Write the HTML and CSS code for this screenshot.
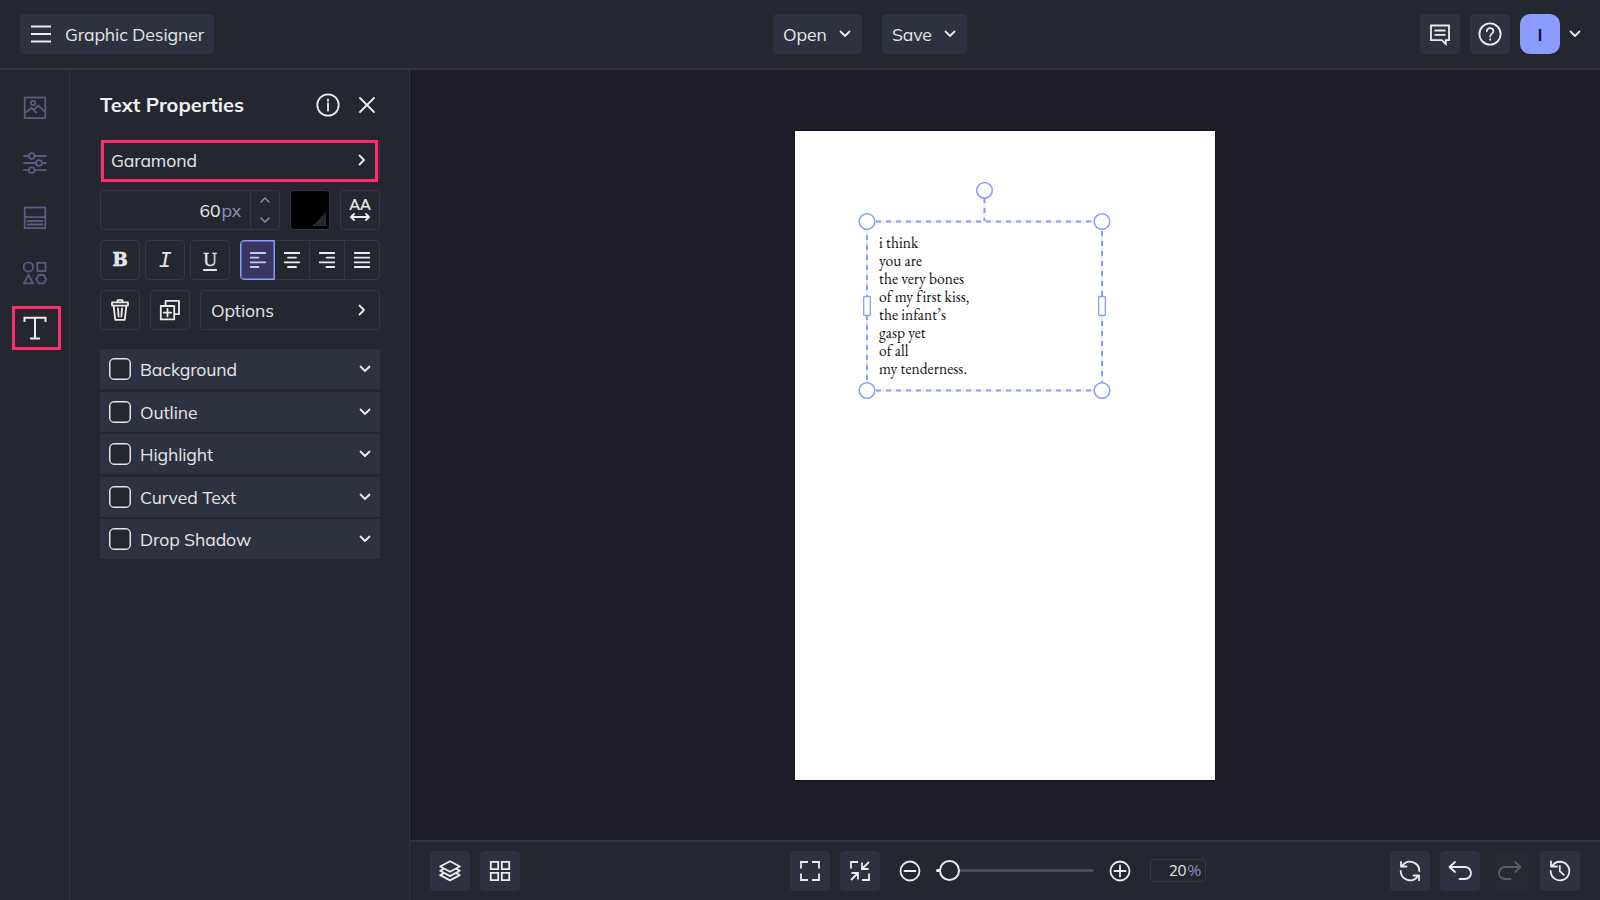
FILE: index.html
```html
<!DOCTYPE html>
<html lang="en">
<head>
    <meta charset="UTF-8">
    <meta name="viewport" content="width=device-width, initial-scale=1.0">
    <title>Graphic Designer</title>
    <link rel="stylesheet" href="styles.css">
</head>
<body>
    <header class="topbar">
        <div class="topbar-left">
            <button class="btn menu-btn">
                <svg width="20" height="18" viewBox="0 0 20 18"><path d="M0 1.5h20M0 9h20M0 16.5h20"/></svg>
                <span>Graphic Designer</span>
            </button>
        </div>
        <div class="topbar-center">
            <button class="btn open-btn"><span>Open</span><svg width="12" height="8" viewBox="0 0 12 8"><path d="M1.5 1.5L6 6l4.5-4.5"/></svg></button>
            <button class="btn save-btn"><span>Save</span><svg width="12" height="8" viewBox="0 0 12 8"><path d="M1.5 1.5L6 6l4.5-4.5"/></svg></button>
        </div>
        <div class="topbar-right">
            <button class="btn icon-btn">
                <svg width="24" height="24" viewBox="0 0 24 24" class="sharp"><path d="M3 3.5h18v14.7h-3.2v3.800l-4-3.800H3z"/><path d="M6.500 8.500h11M6.500 12.800h11"/></svg>
            </button>
            <button class="btn icon-btn">
                <svg width="24" height="24" viewBox="0 0 24 24"><circle cx="12" cy="12" r="10.600"/><path d="M8.800 9.200c0-4.300 6.600-4 6.600-.2 0 2.600-3.200 2.700-3.200 5.400"/><path d="M12.200 17.200v.6"/></svg>
            </button>
            <div class="avatar">I</div>
            <svg class="avatar-arrow" width="12" height="8" viewBox="0 0 12 8"><path d="M1.500 1.500L6 6l4.500-4.500"/></svg>
        </div>
    </header>

    <div class="workspace">
        <nav class="tools">
            <button class="tool">
                <svg width="24" height="24" viewBox="0 0 24 24"><rect x="1.700" y="1.500" width="20.600" height="20.600"/><circle cx="10" cy="7" r="2.200"/><path d="M2 17l6.500-5 5 4.500M10.500 13.800l5-4.200 6.500 6"/></svg>
            </button>
            <button class="tool">
                <svg width="24" height="24" viewBox="0 0 24 24"><path d="M1 5h5M12 5h11M1 12h12M19 12h4M1 19.200h5M12 19.200h11"/><circle cx="8.700" cy="5" r="2.900"/><circle cx="16" cy="12" r="2.900"/><circle cx="8.700" cy="19.200" r="2.900"/></svg>
            </button>
            <button class="tool">
                <svg width="24" height="24" viewBox="0 0 24 24"><rect x="1.700" y="1.500" width="20.600" height="20.600"/><path d="M2 11.200h20M4.500 15h15M4.500 18.500h15"/></svg>
            </button>
            <button class="tool">
                <svg width="24" height="24" viewBox="0 0 24 24"><circle cx="5.400" cy="6" r="4.700"/><rect x="14.300" y="1.800" width="8.200" height="8.200"/><path d="M5.400 14L1 22.400h9zM15.700 14h5l2.500 4.200-2.500 4.200h-5l-2.500-4.200z"/></svg>
            </button>
            <button class="tool active">
                <svg width="26" height="26" viewBox="0 0 26 26"><path d="M2.500 7V2.800h21V7M13 3v20.500M8 23.500h10"/></svg>
            </button>
        </nav>

        <aside class="panel">
            <div class="panel-head">
                <h1>Text Properties</h1>
                <svg width="24" height="24" viewBox="0 0 24 24"><circle cx="12" cy="12" r="10.700"/><path d="M12 10.200v7.600M12 6.500v1.400"/></svg>
                <svg class="close" width="18" height="18" viewBox="0 0 18 18"><path d="M2 2l14 14M16 2L2 16"/></svg>
            </div>

            <div class="row field font-field">
                <span>Garamond</span>
                <svg width="8" height="12" viewBox="0 0 8 12"><path d="M1.500 1.500L6 6l-4.500 4.500"/></svg>
            </div>

            <div class="row">
                <div class="size-field">
                    <div class="size-value">60<span class="unit">px</span></div>
                    <div class="stepper">
                        <svg width="10" height="6" viewBox="0 0 10 6"><path d="M1 5l4-4 4 4"/></svg>
                        <svg width="10" height="6" viewBox="0 0 10 6"><path d="M1 1l4 4 4-4"/></svg>
                    </div>
                </div>
                <div class="swatch"></div>
                <button class="square spacing-btn">
                    <span>AA</span>
                    <svg width="22" height="8" viewBox="0 0 22 8"><path d="M2 4h18M5 1L2 4l3 3M17 1l3 3-3 3"/></svg>
                </button>
            </div>

            <div class="row">
                <div class="styles">
                    <button class="square letter bold">B</button>
                    <button class="square letter italic">I</button>
                    <button class="square letter underline">U</button>
                </div>
                <div class="align">
                    <button class="on"><svg width="16" height="18" viewBox="0 0 16 18"><path d="M.5 2h15M.5 6.600h8M.5 11.300h15M.5 16h8"/></svg></button>
                    <button><svg width="16" height="18" viewBox="0 0 16 18"><path d="M.5 2h15M4 6.600h8M.5 11.300h15M4 16h8"/></svg></button>
                    <button><svg width="16" height="18" viewBox="0 0 16 18"><path d="M.5 2h15M7.500 6.600h8M.5 11.300h15M7.500 16h8"/></svg></button>
                    <button><svg width="16" height="18" viewBox="0 0 16 18"><path d="M.5 2h15M.5 6.600h15M.5 11.300h15M.5 16h15"/></svg></button>
                </div>
            </div>

            <div class="row">
                <button class="square">
                    <svg width="24" height="24" viewBox="0 0 24 24"><path d="M5.600 7.800l1.700 14h9.400l1.700-14M4 4.400h16v3.200H4zM9.500 4.400V2.200h5v2.200M10 10.500l.6 8M14 10.500l-.6 8"/></svg>
                </button>
                <button class="square">
                    <svg width="24" height="24" viewBox="0 0 24 24"><path d="M2.800 8h13.400v13.400H2.800zM7.600 7.500V2.800H21v13.400h-4.500M9.500 11v7.400M5.800 14.700h7.400"/></svg>
                </button>
                <div class="field options-field">
                    <span>Options</span>
                    <svg width="8" height="12" viewBox="0 0 8 12"><path d="M1.500 1.500L6 6l-4.500 4.500"/></svg>
                </div>
            </div>

            <div class="effects">
                <div class="effect"><i class="check"></i><span>Background</span><svg width="12" height="8" viewBox="0 0 12 8"><path d="M1.500 1.500L6 6l4.500-4.500"/></svg></div>
                <div class="effect"><i class="check"></i><span>Outline</span><svg width="12" height="8" viewBox="0 0 12 8"><path d="M1.500 1.500L6 6l4.500-4.500"/></svg></div>
                <div class="effect"><i class="check"></i><span>Highlight</span><svg width="12" height="8" viewBox="0 0 12 8"><path d="M1.500 1.500L6 6l4.500-4.500"/></svg></div>
                <div class="effect"><i class="check"></i><span>Curved Text</span><svg width="12" height="8" viewBox="0 0 12 8"><path d="M1.500 1.500L6 6l4.500-4.500"/></svg></div>
                <div class="effect"><i class="check"></i><span>Drop Shadow</span><svg width="12" height="8" viewBox="0 0 12 8"><path d="M1.500 1.500L6 6l4.500-4.500"/></svg></div>
            </div>
        </aside>

        <main class="stage">
            <div class="canvas-area">
                <div class="page">
                    <div class="poem">i think<br>you are<br>the very bones<br>of my first kiss,<br>the infant’s<br>gasp yet<br>of all<br>my tenderness.</div>
                    <svg class="selection" width="260" height="230" viewBox="0 0 260 230">
                        <g class="track"><path d="M12 51.500h235v169H12zM129.500 20v31"/></g>
                        <g class="dashes"><path d="M21 51.500h218M21 220.500h218M12 65v148M247 61v152M129.500 28v23"/></g>
                        <g class="handles">
                            <circle cx="129.500" cy="20.300" r="7.800"/>
                            <circle cx="12" cy="51.500" r="7.800"/>
                            <circle cx="247" cy="51.500" r="7.800"/>
                            <circle cx="12" cy="220.500" r="7.800"/>
                            <circle cx="247" cy="220.500" r="7.800"/>
                            <rect class="side" x="8.700" y="126.500" width="6.600" height="19" rx="1"/>
                            <rect class="side" x="243.700" y="126.500" width="6.600" height="19" rx="1"/>
                        </g>
                    </svg>
                </div>
            </div>

            <footer class="bottombar">
                <div class="group">
                    <button class="btn icon-btn"><svg width="24" height="24" viewBox="0 0 24 24"><path d="M12 2.200l9.800 5.300L12 12.800 2.200 7.500zM5 10.300l-2.800 1.500 9.800 5.300 9.800-5.300-2.800-1.500M5 14.600l-2.800 1.500 9.800 5.300 9.800-5.300-2.800-1.500"/></svg></button>
                    <button class="btn icon-btn"><svg width="24" height="24" viewBox="0 0 24 24" class="sharp"><path d="M2.800 2.800h7.400v7.400H2.800zM13.800 2.800h7.400v7.400h-7.400zM2.800 13.800h7.400v7.400H2.800zM13.800 13.800h7.400v7.400h-7.400z"/></svg></button>
                </div>
                <div class="group zoom">
                    <button class="btn icon-btn"><svg width="24" height="24" viewBox="0 0 24 24" class="sharp"><path d="M3 9.500V3h7M14 3h7v6.500M21 14.500V21h-7M10 21H3v-6.500"/></svg></button>
                    <button class="btn icon-btn"><svg width="24" height="24" viewBox="0 0 24 24" class="sharp"><path d="M3 9.500V3h7M21 14.500V21h-7M21 3l-7 7M14 3.500V10h6.500M3 21l7-7M10 20.500V14H3.500"/></svg></button>
                    <svg class="minus" width="22" height="22" viewBox="0 0 22 22"><circle cx="11" cy="11" r="9.500"/><path d="M5.500 11h11"/></svg>
                    <div class="slider"><div class="thumb"></div></div>
                    <svg width="22" height="22" viewBox="0 0 22 22"><circle cx="11" cy="11" r="9.500"/><path d="M5.500 11h11M11 5.500v11"/></svg>
                    <div class="percent">20<span class="unit">%</span></div>
                </div>
                <div class="group right">
                    <button class="btn icon-btn"><svg width="24" height="24" viewBox="0 0 24 24"><path d="M4.200 7A9.300 9.300 0 0 1 21.300 12M2.700 12A9.300 9.300 0 0 0 19.800 17M3 2.800V7.500h5.500M21 21.200V16.500h-5.500"/></svg></button>
                    <button class="btn icon-btn"><svg width="24" height="24" viewBox="0 0 24 24"><path d="M7 3L1.500 8 7 13M2 8h15a6 6 0 0 1 0 12H11.500"/></svg></button>
                    <button class="btn icon-btn disabled"><svg width="24" height="24" viewBox="0 0 24 24"><path d="M17 3L22.500 8 17 13M22 8H7a6 6 0 0 0 0 12H12.500"/></svg></button>
                    <button class="btn icon-btn"><svg width="24" height="24" viewBox="0 0 24 24"><path d="M4.200 7a9.300 9.300 0 1 1-1.500 5M3 2.500V7.500h6M11.800 7v5.200l4 3.600"/></svg></button>
                </div>
            </footer>
        </main>
    </div>
</body>
</html>
```

FILE: styles.css
```css
* {
    box-sizing: border-box;
}

body {
    margin: 0;
    height: 100vh;
    display: flex;
    flex-direction: column;
    overflow: hidden;
    background: #242630;
    color: #e6e6e6;
    font-family: Mulish, Muli, Lato, sans-serif;
    font-size: 17.6px;
    letter-spacing: -0.1px;
}

button {
    margin: 0;
    padding: 0;
    border: none;
    background: none;
    color: inherit;
    font: inherit;
    letter-spacing: inherit;
    display: flex;
    align-items: center;
    justify-content: center;
}

svg {
    display: block;
    flex-shrink: 0;
    fill: none;
    stroke: #ececec;
    stroke-width: 1.8;
    stroke-linecap: round;
    stroke-linejoin: round;
}

.sharp {
    stroke-linecap: butt;
    stroke-linejoin: miter;
}

/* ===== TOP BAR ===== */
.topbar {
    height: 70px;
    flex-shrink: 0;
    padding: 14px 20px 0;
    display: grid;
    grid-template-columns: 753px auto 1fr;
    align-items: start;
    border-bottom: 2px solid #31333f;
}

.topbar-left,
.topbar-center,
.topbar-right {
    display: flex;
    align-items: center;
}

.topbar-center {
    gap: 20px;
}

.topbar-right {
    justify-content: flex-end;
    gap: 10px;
    margin-right: -1px;
}

.btn {
    height: 40px;
    border-radius: 4px;
    background: #2e3140;
}

.menu-btn {
    width: 194px;
    padding-left: 11px;
    gap: 14px;
    justify-content: flex-start;
}

.open-btn,
.save-btn {
    padding: 0 11px 0 10px;
    justify-content: space-between;
    width: 89px;
}

.save-btn {
    width: 85px;
}

.icon-btn {
    width: 40px;
}

.avatar {
    width: 40px;
    height: 40px;
    border-radius: 10px;
    background: #8c9bff;
    color: #14141c;
    display: flex;
    align-items: center;
    justify-content: center;
    font-weight: 700;
}

.avatar-arrow {
    margin-left: -1px;
}

/* ===== LEFT TOOLS ===== */
.workspace {
    flex: 1;
    display: flex;
    min-height: 0;
}

.tools {
    width: 70px;
    padding: 15.500px 0 0 12px;
    border-right: 1px solid #31333f;
    display: flex;
    flex-direction: column;
    gap: 11px;
}

.tool {
    width: 46px;
    height: 44px;
}

.tool svg {
    stroke: #595c80;
    stroke-linejoin: miter;
}

.tool.active {
    width: 49px;
    border: 3px solid #ff2d6b;
}

.tool.active svg {
    stroke: #ececec;
    stroke-width: 2;
    stroke-linecap: butt;
    margin-right: 3px;
}

/* ===== TEXT PROPERTIES ===== */
.panel {
    width: 340px;
    padding: 15px 29px 0 30px;
    border-right: 1px solid #31333f;
    display: flex;
    flex-direction: column;
    gap: 10px;
}

.panel-head {
    height: 40px;
    margin-bottom: 5px;
    display: flex;
    align-items: center;
    padding-right: 4px;
}

.panel-head h1 {
    flex: 1;
    margin: 0;
    padding-bottom: 1px;
    font-size: 20px;
    font-weight: 700;
    color: #f0f0f0;
    letter-spacing: 0;
}

.close {
    margin-left: 18px;
}

.row {
    height: 40px;
    display: flex;
    justify-content: space-between;
}

.field {
    border: 1px solid #343746;
    border-radius: 4px;
    display: flex;
    align-items: center;
    justify-content: space-between;
    padding: 0 13px 0 10px;
}

.field span {
    padding-bottom: 1px;
}

.font-field {
    position: relative;
}

/* marker frame over the font picker */
.font-field::after {
    content: '';
    position: absolute;
    inset: -1px 1px -3px 0;
    border: 3px solid #ff2d6b;
}

.size-field {
    width: 180px;
    border: 1px solid #343746;
    border-radius: 4px;
    display: flex;
}

.size-value {
    flex: 1;
    display: flex;
    align-items: center;
    justify-content: flex-end;
    padding-right: 9px;
}

.unit {
    color: #9095b8;
    margin-left: 1px;
}

.stepper {
    width: 29px;
    border-left: 1px solid #343746;
    display: flex;
    flex-direction: column;
    align-items: center;
    justify-content: center;
    gap: 14px;
}

.stepper svg {
    stroke: #9095b8;
    stroke-width: 1.4;
}

.swatch {
    width: 40px;
    border: 1px solid #343746;
    border-radius: 4px;
    background: linear-gradient(135deg, transparent 50%, #242630 50%) 21px 21px / 14px 14px no-repeat #000;
}

.square {
    width: 40px;
    height: 40px;
    border: 1px solid #343746;
    border-radius: 4px;
}

.spacing-btn {
    flex-direction: column;
    font-size: 14.5px;
    line-height: 14px;
    font-weight: 700;
    letter-spacing: 0;
    gap: 1px;
    padding-bottom: 2px;
}

.styles {
    width: 130px;
    display: flex;
    justify-content: space-between;
}

.letter {
    font-family: 'DejaVu Serif', serif;
    font-size: 18px;
    line-height: 1;
    letter-spacing: 0;
}

.bold {
    font-weight: 700;
    -webkit-text-stroke: 0.6px;
}

.italic {
    font-family: 'Liberation Mono', monospace;
    font-style: italic;
    font-size: 22px;
    padding-top: 3px;
}

.underline {
    font-family: 'Liberation Serif', serif;
    font-size: 19px;
    -webkit-text-stroke: 0.3px;
    text-decoration: underline;
    text-decoration-thickness: 2px;
    text-underline-offset: 3px;
    padding-bottom: 1px;
}

.align {
    width: 140px;
    display: flex;
    border: 1px solid #343746;
    border-radius: 4px;
}

.align button {
    flex: 1;
    border-left: 1px solid #343746;
}

.align .on {
    flex: 0 0 35px;
    margin: -1px 0 -1px -1px;
    border: 1px solid #8c9bff;
    box-shadow: inset 0 0 0 0.5px #8c9bff;
    border-radius: 4px 0 0 4px;
    background: #393761;
}

.align .on svg {
    stroke: #c3c9ff;
}

.align .on + button {
    border-left: none;
}

.options-field {
    width: 180px;
}

.effects {
    margin-top: 9.400px;
    display: flex;
    flex-direction: column;
    gap: 2.4px;
}

.effect {
    height: 40px;
    padding: 0 9px;
    background: #2e3140;
    display: flex;
    align-items: center;
    gap: 9px;
}

.effect span {
    flex: 1;
}

.check {
    width: 22px;
    height: 22px;
    border: 1px solid #e6e6e6;
    box-shadow: inset 0 0 0 0.5px #e6e6e6;
    border-radius: 5px;
    background: #242630;
}

/* ===== CANVAS ===== */
.stage {
    flex: 1;
    display: flex;
    flex-direction: column;
    min-width: 0;
}

.canvas-area {
    flex: 1;
    display: flex;
    align-items: center;
    justify-content: center;
    background: #1e1d27;
}

.page {
    width: 420px;
    height: 649px;
    padding: 103px 0 0 84px;
    position: relative;
    background: #fff;
    box-shadow: 0 0 1px 1px #14131b;
}

.poem {
    font-family: Garamond, 'EB Garamond', 'Liberation Serif', serif;
    font-size: 15.5px;
    line-height: 18.1px;
    letter-spacing: 0.05px;
    color: #111;
}

.selection {
    position: absolute;
    left: 60px;
    top: 39.5px;
}

.track {
    stroke: #ececec;
    stroke-width: 2;
}

.dashes {
    stroke: #8c9bff;
    stroke-width: 2;
    stroke-dasharray: 5 5;
    stroke-linecap: butt;
}

.handles {
    fill: #fff;
    stroke: #8c9bff;
    stroke-width: 1.6;
}

.side {
    stroke-width: 1.3;
}

/* ===== BOTTOM BAR ===== */
.bottombar {
    height: 60px;
    padding: 0 20px 1px;
    border-top: 2px solid #31333f;
    display: grid;
    grid-template-columns: 340px 1fr 340px;
    align-items: center;
}

.group {
    display: flex;
    align-items: center;
    gap: 10px;
}

.zoom {
    padding-left: 20px;
}

.right {
    justify-content: flex-end;
}

.minus {
    margin-left: 9px;
}

.slider {
    width: 158px;
    height: 3px;
    margin: 0 5px;
    border-radius: 2px;
    background: linear-gradient(90deg, #ececec 10px, #484b5e 10px);
    display: flex;
    align-items: center;
    padding-left: 3px;
}

.thumb {
    width: 21px;
    height: 21px;
    flex-shrink: 0;
    border: 2px solid #ececec;
    border-radius: 50%;
    background: #242630;
}

.percent {
    width: 56px;
    height: 23px;
    margin-left: 9px;
    padding-right: 4px;
    border: 1px solid #343746;
    border-radius: 4px;
    display: flex;
    align-items: center;
    justify-content: flex-end;
    font-size: 15px;
    letter-spacing: -0.3px;
}

.disabled {
    background: #272932;
}

.disabled svg {
    stroke: #5b5c64;
}
```
